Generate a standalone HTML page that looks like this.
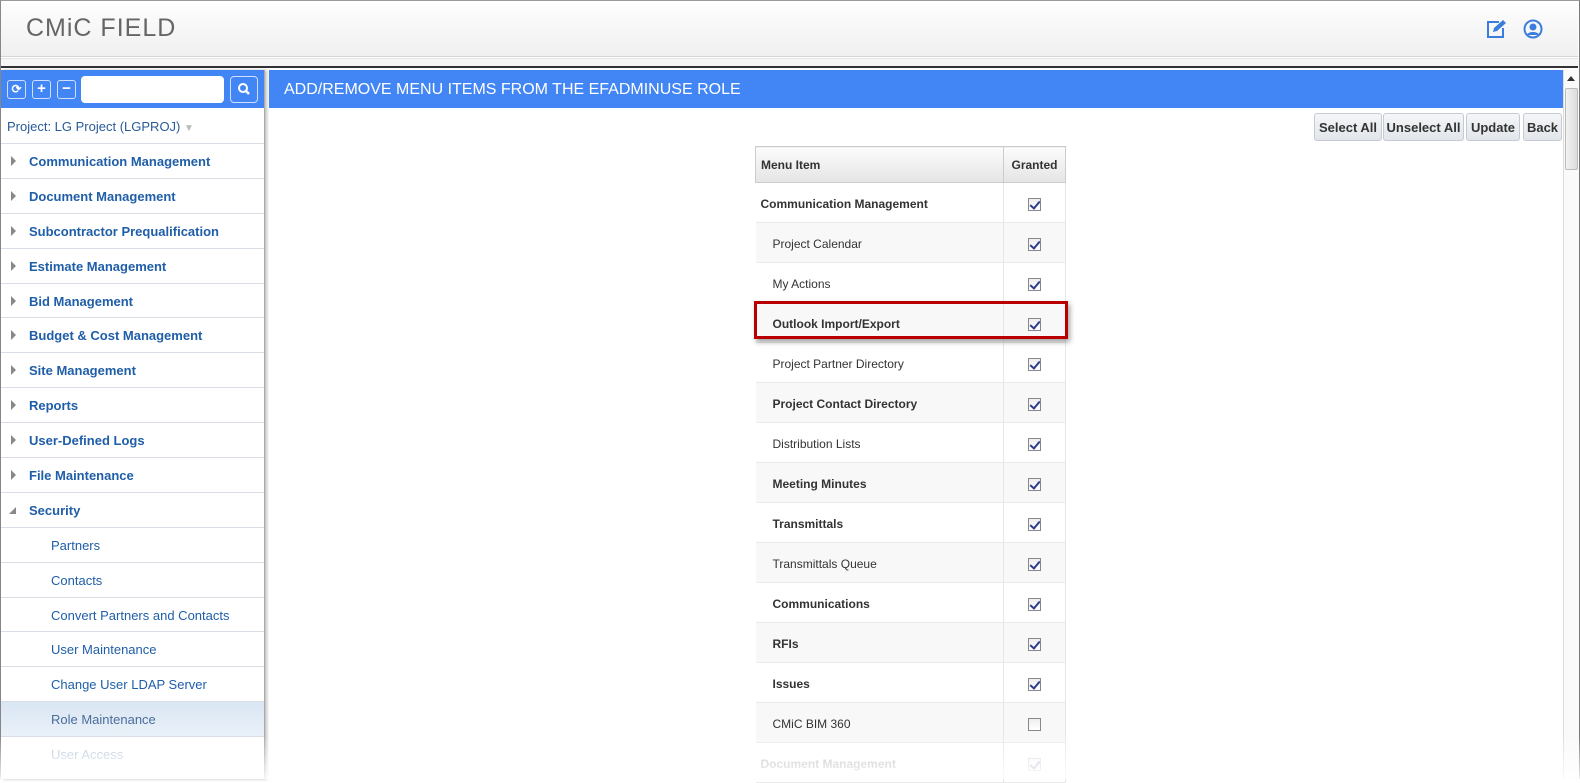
<!DOCTYPE html>
<html><head><meta charset="utf-8"><style>
*{box-sizing:border-box;margin:0;padding:0}
body{width:1580px;height:779px;overflow:hidden;background:#fff;font-family:"Liberation Sans",Arial,sans-serif;position:relative}
#frame{position:absolute;left:0;top:0;width:1580px;height:779px;border-left:1px solid #888;border-right:1px solid #777;border-top:1px solid #999}
#hdr{position:absolute;left:1px;top:1px;width:1577px;height:56px;background:linear-gradient(#fefefe,#f0f0f0);border-bottom:1px solid #d4d4d4}
#logo{position:absolute;left:25px;top:13px;font-size:25px;color:#666;letter-spacing:1px;font-weight:normal}
#band{position:absolute;left:1px;top:58px;width:1577px;height:10px;background:#f6f6f6;border-top:1px solid #e4e4e4;border-bottom:2px solid #333}
#side{position:absolute;left:1px;top:70px;width:264px;height:709px;background:#fff;border-right:1px solid #aaa;box-shadow:2px 0 3px rgba(0,0,0,.25)}
#tb{height:38px;background:#4285f4;position:relative}
.ib{position:absolute;top:10px;width:19px;height:19px;border:1px solid #cfe0ff;border-radius:3px;color:#fff;font-weight:bold;font-size:15px;line-height:16px;text-align:center}
#srch{position:absolute;left:80px;top:6px;width:143px;height:27px;background:#fff;border-radius:4px}
#sb{position:absolute;left:229px;top:6px;width:28px;height:27px;border:1px solid #cfe0ff;border-radius:4px}
#proj{height:36px;line-height:38px;padding-left:6px;font-size:13px;color:#2a5a9a;border-bottom:1px solid #d8dde6}
.tr{height:34.9px;line-height:35px;border-bottom:1px solid #d8dde6;font-size:13px;color:#1f5ea8;position:relative}
.tr.p{font-weight:bold;padding-left:28px}
.tr.p:before{content:"";position:absolute;left:10px;top:12px;border-left:5px solid #888;border-top:5px solid transparent;border-bottom:5px solid transparent}
.tr.c{padding-left:50px}
.tr.open:before{border:none;left:8px;top:14px;width:0;height:0;border-right:0;border-bottom:7px solid #888;border-left:7px solid transparent}
#main{position:absolute;left:269px;top:70px;width:1294px;height:709px;background:#fff}
#mh{height:38px;background:#4285f4;color:#fff;font-size:16px;line-height:40px;padding-left:15px}
.btn{position:absolute;top:43px;height:28px;border:1px solid #c4cbd4;border-radius:3px;background:linear-gradient(#f4f6f8,#e2e6ea);font-size:13px;font-weight:bold;color:#333;line-height:28px;text-align:center}
#scroll{position:absolute;left:1563px;top:70px;width:16px;height:709px;background:#fafafa;border-left:1px solid #ddd}
#thumb{position:absolute;left:1px;top:18px;width:13px;height:82px;background:linear-gradient(90deg,#f2f2f2,#dcdcdc);border:1px solid #bbb;border-radius:2px}
table{position:absolute;left:486px;top:76px;border-collapse:collapse;width:311px;font-size:12px}
th{height:36px;background:linear-gradient(#fcfcfc,#e4e4e4);border:1px solid #ccc;text-align:left;color:#333;padding-left:5px}
th.g{width:62px;text-align:center;padding:0}
td{height:40px;border-bottom:1px solid #ebebeb;color:#333;padding-top:2px}
td.n{padding-left:17px}
td.b{font-weight:bold}
td.t{padding-left:5px;font-weight:bold}
td.g{border-left:1px solid #e6e6e6;text-align:center;border-right:1px solid #e6e6e6}
tr.alt td{background:#f8f8f8}
.cb{display:inline-block;width:13px;height:13px;border:1px solid #888;background:linear-gradient(#eee,#fff);position:relative;vertical-align:middle}
.cb.k:after{content:"";position:absolute;left:3px;top:0px;width:4px;height:8px;border:solid #2a3d8a;border-width:0 2px 2px 0;transform:rotate(40deg)}
#hl{position:absolute;left:754px;top:301px;width:314px;height:38px;border:3px solid #b80000;box-shadow:2px 3px 5px rgba(0,0,0,.35)}
#fade{position:absolute;left:0;top:735px;width:1580px;height:44px;background:linear-gradient(rgba(255,255,255,0),rgba(255,255,255,.85))}
</style></head><body>
<div id="frame"></div>
<div id="hdr"><div id="logo">CMiC FIELD</div>
<svg style="position:absolute;left:1484px;top:18px" width="22" height="20" viewBox="0 0 22 20"><path d="M14 3H3v15h15V9" fill="none" stroke="#3b7ddd" stroke-width="2"/><path d="M8 13l1-4 9-8 3 3-9 8z" fill="#3b7ddd"/></svg>
<svg style="position:absolute;left:1522px;top:18px" width="20" height="20" viewBox="0 0 20 20"><circle cx="10" cy="10" r="8.5" fill="none" stroke="#3b7ddd" stroke-width="2"/><circle cx="10" cy="8" r="3.5" fill="#3b7ddd"/><path d="M4 16c1-4 11-4 12 0" fill="#3b7ddd"/></svg>
</div>
<div id="band"></div>
<div id="side">
<div id="tb"><div class="ib" style="left:6px;font-size:12px">⟳</div><div class="ib" style="left:31px">+</div><div class="ib" style="left:56px">−</div><div id="srch"></div><div id="sb"><svg width="26" height="25" viewBox="0 0 26 25"><circle cx="12" cy="11" r="4" fill="none" stroke="#fff" stroke-width="2"/><path d="M15 14l3 3" stroke="#fff" stroke-width="2.5"/></svg></div></div>
<div id="proj">Project: LG Project (LGPROJ) <span style="color:#bbb;font-size:10px">▼</span></div>
<div class="tr p">Communication Management</div>
<div class="tr p">Document Management</div>
<div class="tr p">Subcontractor Prequalification</div>
<div class="tr p">Estimate Management</div>
<div class="tr p">Bid Management</div>
<div class="tr p">Budget &amp; Cost Management</div>
<div class="tr p">Site Management</div>
<div class="tr p">Reports</div>
<div class="tr p">User-Defined Logs</div>
<div class="tr p">File Maintenance</div>
<div class="tr p open">Security</div>
<div class="tr c">Partners</div>
<div class="tr c">Contacts</div>
<div class="tr c">Convert Partners and Contacts</div>
<div class="tr c">User Maintenance</div>
<div class="tr c">Change User LDAP Server</div>
<div class="tr c" style="background:linear-gradient(#d9e6f3,#eaf1f9);color:#4a6d9c">Role Maintenance</div>
<div class="tr c" style="color:#b8c8dc;border:none">User Access</div>
</div>
<div id="main">
<div id="mh">ADD/REMOVE MENU ITEMS FROM THE EFADMINUSE ROLE</div>
<div class="btn" style="left:1045px;width:68px">Select All</div>
<div class="btn" style="left:1114px;width:81px">Unselect All</div>
<div class="btn" style="left:1197px;width:54px">Update</div>
<div class="btn" style="left:1254px;width:39px">Back</div>
<table>
<tr><th>Menu Item</th><th class="g">Granted</th></tr>
<tr><td class="t">Communication Management</td><td class="g"><span class="cb k"></span></td></tr>
<tr class="alt"><td class="n">Project Calendar</td><td class="g"><span class="cb k"></span></td></tr>
<tr><td class="n">My Actions</td><td class="g"><span class="cb k"></span></td></tr>
<tr class="alt"><td class="n b">Outlook Import/Export</td><td class="g"><span class="cb k"></span></td></tr>
<tr><td class="n">Project Partner Directory</td><td class="g"><span class="cb k"></span></td></tr>
<tr class="alt"><td class="n b">Project Contact Directory</td><td class="g"><span class="cb k"></span></td></tr>
<tr><td class="n">Distribution Lists</td><td class="g"><span class="cb k"></span></td></tr>
<tr class="alt"><td class="n b">Meeting Minutes</td><td class="g"><span class="cb k"></span></td></tr>
<tr><td class="n b">Transmittals</td><td class="g"><span class="cb k"></span></td></tr>
<tr class="alt"><td class="n">Transmittals Queue</td><td class="g"><span class="cb k"></span></td></tr>
<tr><td class="n b">Communications</td><td class="g"><span class="cb k"></span></td></tr>
<tr class="alt"><td class="n b">RFIs</td><td class="g"><span class="cb k"></span></td></tr>
<tr><td class="n b">Issues</td><td class="g"><span class="cb k"></span></td></tr>
<tr class="alt"><td class="n">CMiC BIM 360</td><td class="g"><span class="cb"></span></td></tr>
<tr><td class="t" style="color:#bbb">Document Management</td><td class="g"><span class="cb k" style="opacity:.3"></span></td></tr>
</table>
</div>
<div id="scroll"><div style="position:absolute;left:3px;top:6px;border-bottom:5px solid #333;border-left:4px solid transparent;border-right:4px solid transparent"></div><div id="thumb"></div></div>
<div id="hl"></div>
<div id="fade"></div>
</body></html>
